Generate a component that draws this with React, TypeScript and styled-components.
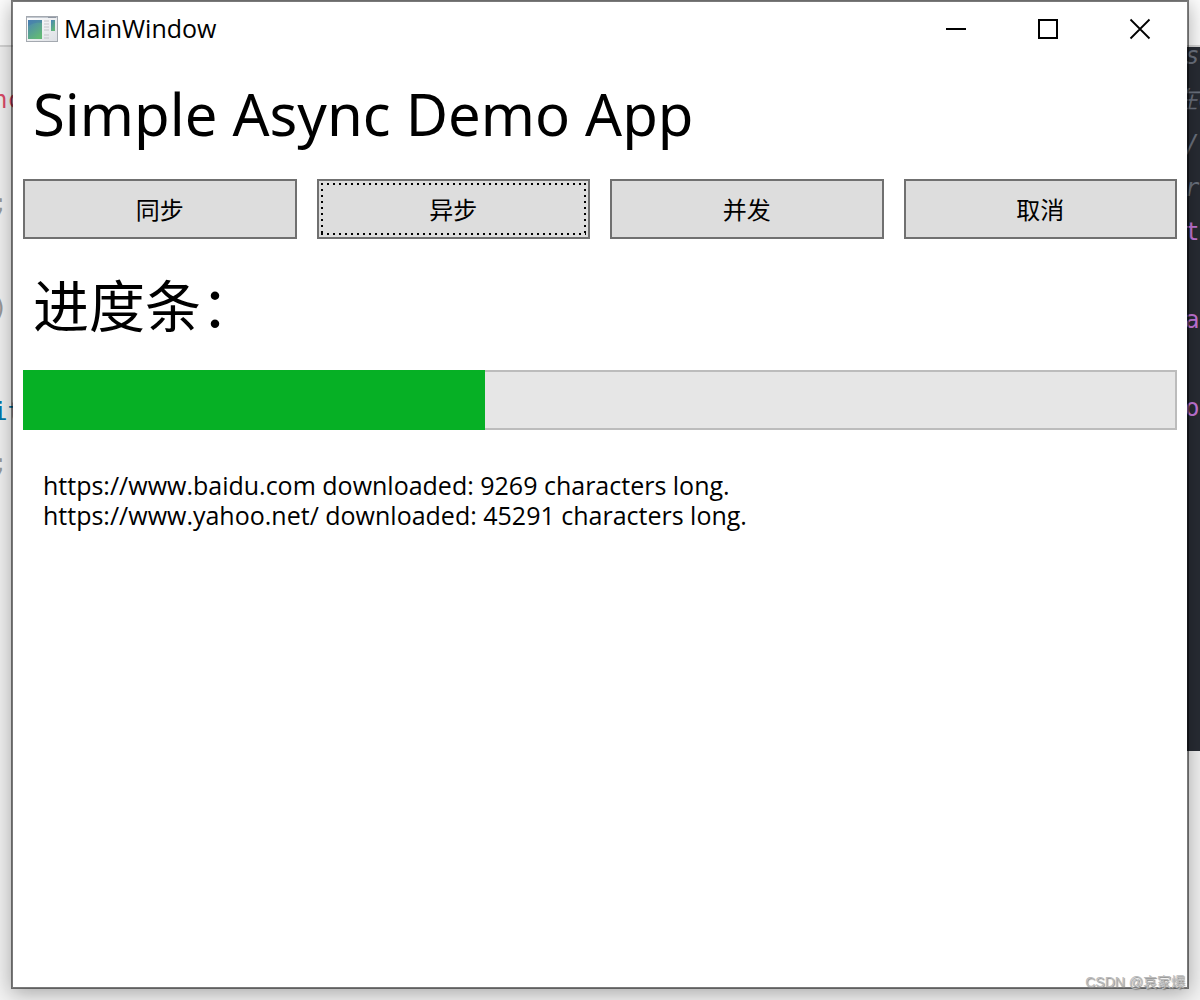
import React, { useState } from "react";
import styled, { createGlobalStyle, css } from "styled-components";

const ui = `"Open Sans", "Noto Sans CJK SC", sans-serif`;
const mono = `"DejaVu Sans Mono", "Noto Sans CJK SC", monospace`;

const GlobalStyle = createGlobalStyle`
  * { box-sizing: border-box; }
  body { margin: 0; background: #f3f3f3; color: #000; font-family: ${ui}; }
`;

const Desktop = styled.div`
  display: grid;
  grid-template-columns: 11px minmax(0, 1fr) 11px;
  grid-template-rows: minmax(0, 1fr) 11px;
  height: 100vh;
  overflow: hidden;
`;

const Backdrop = styled.aside<{ $side: "left" | "right" }>`
  grid-row: 1 / 3;
  grid-column: ${(p) => (p.$side === "left" ? 1 : 3)};
  display: flex;
  flex-direction: column;
  overflow: hidden;
  width: 13px;
  margin-left: ${(p) => (p.$side === "left" ? 0 : -2)}px;
`;

const BackdropBar = styled.div`
  flex: none;
  height: 47px;
  background: #fdfdfd;
  border-bottom: 2px solid #d6d6d6;
`;

const LightEditor = styled.div`
  padding-top: 27px;
  font: 24px / 52px ${mono};
`;

const DarkEditor = styled.div`
  height: 704px;
  overflow: hidden;
  background: #282c34;
  font: 24px / 44px ${mono};
`;

const Lines = styled.pre<{ $scrolled?: number }>`
  margin: ${(p) => -(p.$scrolled ?? 0)}px 0 0;
  font: inherit;
`;

const CodeLine = styled.div<{ $color: string; $shift?: number; $italic?: boolean }>`
  height: 1lh;
  color: ${(p) => p.$color};
  font-style: ${(p) => (p.$italic ? "italic" : "normal")};
  text-indent: ${(p) => p.$shift ?? 0}px;
`;

const Window = styled.main`
  grid-row: 1;
  grid-column: 2;
  z-index: 1;
  display: flex;
  flex-direction: column;
  background: #fff;
  background-clip: padding-box;
  border: 2px solid rgba(0, 0, 0, 0.5);
  box-shadow: 0 4px 20px rgba(0, 0, 0, 0.32);
`;

const TitleBar = styled.header`
  display: flex;
  align-items: center;
  height: 54px;
  padding: 0 1px 0 13px;
  gap: 6px;
  font-size: 25px;
  line-height: 34px;
`;

const Caption = styled.span`
  flex: 1;
  padding-bottom: 2px;
`;

const CaptionButtons = styled.div`
  display: flex;
`;

const CaptionButton = styled.button`
  display: grid;
  place-items: center;
  width: 92px;
  height: 54px;
  padding: 0;
  border: 0;
  background: none;
`;

const Content = styled.div`
  display: flex;
  flex-direction: column;
  padding: 0 10px;
`;

const Heading = styled.h1`
  margin: 0;
  padding: 0 10px 8px;
  font: 400 58px / 115px "Noto Sans", sans-serif;
`;

const ButtonRow = styled.div`
  display: grid;
  grid-template-columns: repeat(4, minmax(0, 1fr));
  gap: 20px;
`;

const focusDots = css`
  background-image:
    repeating-linear-gradient(90deg, #000 0 2px, transparent 2px 6px),
    repeating-linear-gradient(90deg, #000 0 2px, transparent 2px 6px),
    repeating-linear-gradient(#000 0 2px, transparent 2px 6px),
    repeating-linear-gradient(#000 0 2px, transparent 2px 6px);
  background-size: 100% 2px, 100% 2px, 2px 100%, 2px 100%;
  background-position: top, bottom, left, right;
  background-repeat: no-repeat;
`;

const ActionButton = styled.button<{ $focused: boolean }>`
  display: grid;
  height: 60px;
  padding: 2px;
  border: 2px solid #707070;
  background: #ddd;
  color: #000;
  font: 24px / 28px "Noto Sans CJK SC", sans-serif;
  outline: none;

  span {
    display: grid;
    place-items: center;
    ${(p) => p.$focused && focusDots}
  }
`;

const ProgressLabel = styled.label`
  padding: 0 10px 4px;
  font: 56px / 127px "Noto Sans CJK SC", sans-serif;
`;

const Progress = styled.progress`
  appearance: none;
  display: block;
  width: 100%;
  height: 60px;
  border: 0;
  background: #e6e6e6;

  &::-webkit-progress-bar {
    background: #e6e6e6;
    box-shadow: inset 0 0 0 2px #bcbcbc;
  }
  &::-webkit-progress-value {
    background: #06b025;
  }
`;

const Log = styled.output`
  padding: 40px 20px;
  font-size: 25px;
  line-height: 30px;
  white-space: pre-line;
`;

const Watermark = styled.small`
  grid-row: 1 / 3;
  grid-column: 2;
  z-index: 2;
  align-self: end;
  justify-self: end;
  padding: 0 4px 7px;
  color: #bbb;
  font: 14px / 22px "Liberation Sans", "Noto Sans CJK SC", sans-serif;
  text-shadow: 1px 1px 1px #888;
  pointer-events: none;
`;

const AppIcon = () => (
  <svg width="32" height="26" viewBox="0 0 32 26" aria-hidden="true">
    <defs>
      <linearGradient id="pane" x1="0" y1="0" x2="0.6" y2="1">
        <stop offset="0" stopColor="#4a83b8" />
        <stop offset="1" stopColor="#62b877" />
      </linearGradient>
      <linearGradient id="frame" x1="0" y1="0" x2="1" y2="1">
        <stop offset="0" stopColor="#fff" />
        <stop offset="1" stopColor="#dcdfe4" />
      </linearGradient>
    </defs>
    <rect x="0.5" y="0.5" width="31" height="25" fill="url(#frame)" stroke="#a4a9b0" />
    <path d="M1 1.5H31" stroke="#c2c8d0" />
    <path d="M22 1.500H30" stroke="#8f97a3" />
    <rect x="2" y="4" width="14" height="19" fill="url(#pane)" />
    <path d="M2 10Q9 5 16 7V4H2Z" fill="#4379ac" opacity="0.5" />
    <path d="M18 5H23M18 8H23M18 11H23M18 14H23M18 19H23M18 22H23" stroke="#c2c4c8" />
    <rect x="25" y="4" width="4" height="11" fill="url(#pane)" />
  </svg>
);

const glyphs = {
  Minimize: <path d="M1 11H21" stroke="#000" strokeWidth="2" />,
  Maximize: <path d="M2 2H20V20H2Z" stroke="#000" strokeWidth="2" />,
  Close: <path d="M1.500 1.500L20.500 20.500M20.500 1.500L1.500 20.500" stroke="#000" strokeWidth="1.800" />,
};

const actions = ["同步", "异步", "并发", "取消"];

const log = [
  "https://www.baidu.com downloaded: 9269 characters long.",
  "https://www.yahoo.net/ downloaded: 45291 characters long.",
];

export default function App() {
  const [current, setCurrent] = useState("异步");

  return (
    <>
      <GlobalStyle />
      <Desktop>
        <Backdrop $side="left">
          <BackdropBar />
          <LightEditor>
            <Lines>
              <CodeLine $color="#dd4a68" $shift={-7}>nc</CodeLine>
              <CodeLine $color="#999" />
              <CodeLine $color="#999" $shift={-7}>;</CodeLine>
              <CodeLine $color="#999" />
              <CodeLine $color="#999" $shift={-7}>)</CodeLine>
              <CodeLine $color="#999" />
              <CodeLine $color="#0077aa" $shift={-7}>it</CodeLine>
              <CodeLine $color="#999" $shift={-7}>;</CodeLine>
            </Lines>
          </LightEditor>
        </Backdrop>

        <Window>
          <TitleBar>
            <AppIcon />
            <Caption>MainWindow</Caption>
            <CaptionButtons>
              {Object.entries(glyphs).map(([name, glyph]) => (
                <CaptionButton key={name} aria-label={name}>
                  <svg width="22" height="22" viewBox="0 0 22 22" fill="none">{glyph}</svg>
                </CaptionButton>
              ))}
            </CaptionButtons>
          </TitleBar>
          <Content>
            <Heading>Simple Async Demo App</Heading>
            <ButtonRow>
              {actions.map((name) => (
                <ActionButton key={name} $focused={name === current} onClick={() => setCurrent(name)}>
                  <span>{name}</span>
                </ActionButton>
              ))}
            </ButtonRow>
            <ProgressLabel htmlFor="progress">进度条：</ProgressLabel>
            <Progress id="progress" value={40} max={100} />
            <Log>{log.join("\n")}</Log>
          </Content>
        </Window>

        <Backdrop $side="right">
          <BackdropBar />
          <DarkEditor>
            <Lines $scrolled={13}>
              <CodeLine $color="#6c7380" $shift={-2} $italic>s</CodeLine>
              <CodeLine $color="#6c7380" $shift={-13} $italic>在c</CodeLine>
              <CodeLine $color="#6c7380" $shift={-2} $italic>/</CodeLine>
              <CodeLine $color="#6c7380" $shift={-2} $italic>r</CodeLine>
              <CodeLine $color="#c678dd" $shift={-2}>t</CodeLine>
              <CodeLine $color="#c678dd" />
              <CodeLine $color="#c678dd" $shift={-2}>a</CodeLine>
              <CodeLine $color="#c678dd" />
              <CodeLine $color="#c678dd" $shift={-2}>o</CodeLine>
            </Lines>
          </DarkEditor>
        </Backdrop>
        <Watermark>CSDN @哀家爆</Watermark>
      </Desktop>
    </>
  );
}
